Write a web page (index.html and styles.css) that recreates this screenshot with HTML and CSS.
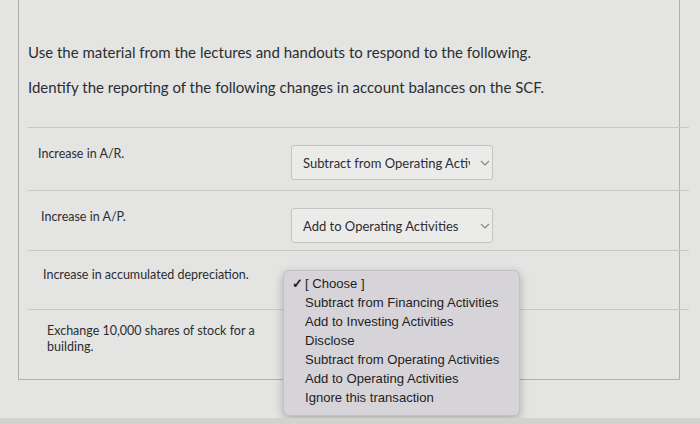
FILE: index.html
```html
<!DOCTYPE html>
<html lang="en">
<head>
    <meta charset="UTF-8">
    <title>Question</title>
    <link rel="stylesheet" href="styles.css">
</head>
<body>
    <div class="question">
        <div class="text">
            <p>Use the material from the lectures and handouts to respond to the following.</p>
            <p>Identify the reporting of the following changes in account balances on the SCF.</p>
        </div>
        <div class="answers">
            <div class="row r1">
                <div class="label">Increase in A/R.</div>
                <div class="pick">
                    <div class="sel">
                        <span class="val">Subtract from Operating Activities</span>
                        <svg class="arrow" width="10" height="6" viewBox="0 0 10 6"><path d="M1 1l4 4 4-4" fill="none" stroke="#888" stroke-width="1.2"/></svg>
                    </div>
                </div>
            </div>
            <div class="row r2">
                <div class="label">Increase in A/P.</div>
                <div class="pick">
                    <div class="sel">
                        <span class="val">Add to Operating Activities</span>
                        <svg class="arrow" width="10" height="6" viewBox="0 0 10 6"><path d="M1 1l4 4 4-4" fill="none" stroke="#888" stroke-width="1.2"/></svg>
                    </div>
                </div>
            </div>
            <div class="row r3">
                <div class="label">Increase in accumulated depreciation.</div>
                <div class="pick">
                    <ul class="menu">
                        <li class="on"><span class="tick">✓</span>[ Choose ]</li>
                        <li>Subtract from Financing Activities</li>
                        <li>Add to Investing Activities</li>
                        <li>Disclose</li>
                        <li>Subtract from Operating Activities</li>
                        <li>Add to Operating Activities</li>
                        <li>Ignore this transaction</li>
                    </ul>
                </div>
            </div>
            <div class="row r4">
                <div class="label">Exchange 10,000 shares of stock for a building.</div>
                <div class="pick"></div>
            </div>
        </div>
    </div>
</body>
</html>
```

FILE: styles.css
```css
body{
    margin: 0;
    background: #e4e4e2;
    font-family: Lato, "Open Sans", sans-serif;
    color: #2b2e31;
    height: 424px;
    overflow: hidden;
    border-bottom: 6px solid #d2d2d0;
    box-sizing: border-box;
}
.question{
    margin-left: 18px;
    width: 662px;
    height: 380px;
    border: 1px solid #b0b0ae;
    border-top: none;
    box-sizing: border-box;
    padding-left: 9px;
}
.text{
    padding-top: 42px;
    height: 85px;
}
.text p{
    margin: 0 0 15px;
    font-size: 15px;
    line-height: 20px;
}
.answers{
    border-top: 1px solid #c8c8c6;
    margin-right: -10px;
}
.row{
    display: flex;
    border-bottom: 1px solid #c8c8c6;
}
.r1{ height: 62px; }
.r2{ height: 59px; }
.r3{ height: 58px; }
.r4{ border-bottom: none; }
.label{
    width: 263px;
    padding-left: 10px;
    padding-top: 18px;
    font-size: 12.5px;
    line-height: 16px;
    box-sizing: border-box;
}
.r2 .label{ padding-left: 13px; }
.r3 .label{ padding-left: 15px; padding-top: 16px; }
.r4 .label{
    padding-left: 19px;
    padding-right: 10px;
    padding-top: 13px;
}
.pick{
    position: relative;
    padding-top: 17px;
}
.sel{
    width: 202px;
    height: 35px;
    box-sizing: border-box;
    border: 1px solid #c4c4c2;
    border-radius: 3px;
    background: #ebebe9;
    display: flex;
    align-items: center;
    padding-left: 11px;
    font-size: 13px;
}
.val{
    width: 167px;
    white-space: nowrap;
    overflow: hidden;
}
.arrow{
    margin-left: 10px;
}
.menu{
    position: absolute;
    left: -8px;
    top: 19px;
    width: 235px;
    margin: 0;
    padding: 3px 0 8px;
    list-style: none;
    background: #d6d4d9;
    border: 1px solid #c2c0c6;
    border-radius: 6px;
    box-shadow: 0 3px 10px rgba(0,0,0,.25);
    font-family: "Liberation Sans", Arial, sans-serif;
    font-size: 13.1px;
    color: #1e1e22;
}
.menu li{
    line-height: 19px;
    padding-left: 21px;
    position: relative;
}
.tick{
    position: absolute;
    left: 8px;
    font-weight: bold;
}
```
